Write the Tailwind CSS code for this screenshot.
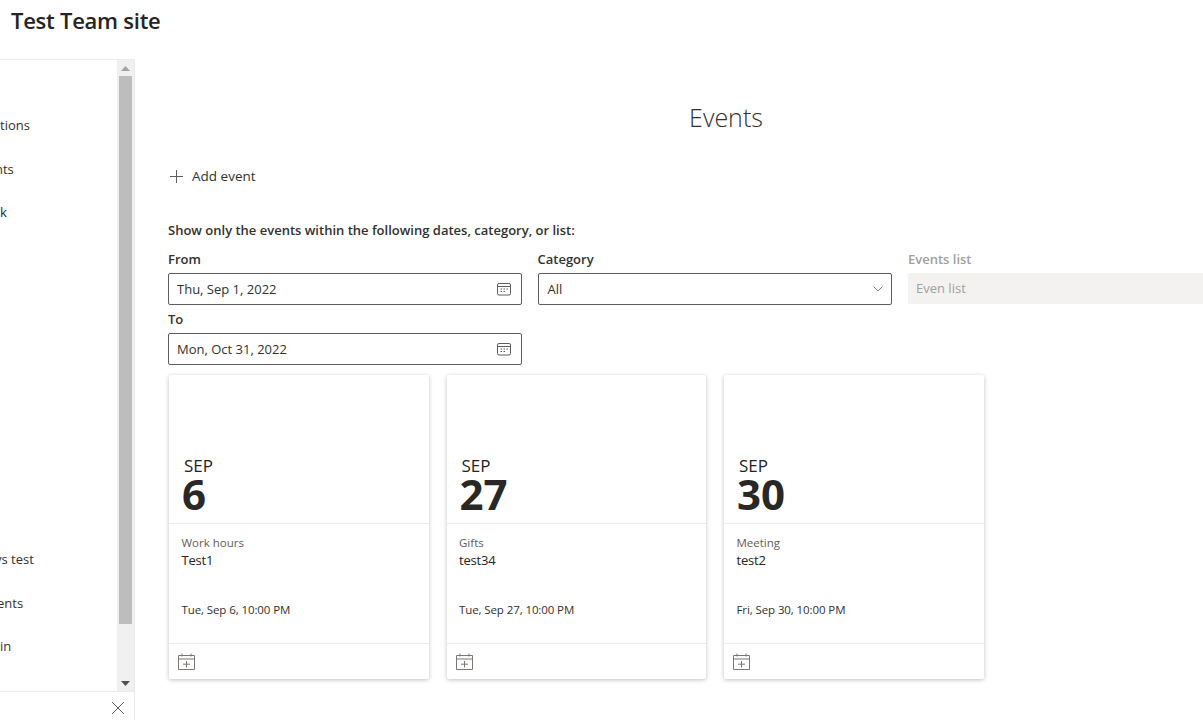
<!DOCTYPE html>
<html>
<head>
<meta charset="utf-8">
<script src="https://cdn.jsdelivr.net/npm/@tailwindcss/browser@4"></script>
</head>
<body class="w-[1203px] h-[720px] overflow-hidden bg-white font-['Open_Sans','Noto_Sans',sans-serif] text-[#323130]">
<header class="h-[59px] pl-[11px] pt-[4px] text-[22px] leading-[32px] font-semibold text-[#252423] tracking-[-0.25px]">Test Team site</header>
<div class="flex h-[661px]">
  <aside class="w-[135px] shrink-0 flex flex-col border-t border-r border-[#edebe9]">
    <div class="flex-1 flex min-h-0">
      <nav class="w-[117px] overflow-hidden flex flex-col text-[13px] leading-[18px] text-[#323130]">
        <div class="h-[56px]"></div>
        <div class="h-[43.5px]">tions</div>
        <div class="h-[43.5px] -ml-[5px]">nts</div>
        <div class="h-[347px] text-[#0a2a66]">k</div>
        <div class="h-[43.5px] -ml-[5px]">ys test</div>
        <div class="h-[43.5px] -ml-[3px]">ents</div>
        <div class="text-[#4a2a4a]">in</div>
      </nav>
      <div class="w-[17px] bg-[#f0f0f0] flex flex-col items-center">
        <div class="h-[16px] flex items-center justify-center">
          <svg width="9" height="5" viewBox="0 0 9 5"><path d="M4.500 0 9 5H0z" fill="#a3a3a3"/></svg>
        </div>
        <div class="w-[13px] h-[548px] bg-[#bdbdbd]"></div>
        <div class="flex-1 flex items-end pb-[5px]">
          <svg width="9" height="5" viewBox="0 0 9 5"><path d="M0 0h9L4.500 5z" fill="#505050"/></svg>
        </div>
      </div>
    </div>
    <div class="h-[29px] shrink-0 border-t border-[#edebe9] flex items-center justify-end pr-[9px] pt-[3px]">
      <svg width="14" height="14" viewBox="0 0 14 14"><path d="M1 1l12 12M13 1L1 13" stroke="#605e5c" stroke-width="1" fill="none"/></svg>
    </div>
  </aside>
  <main class="flex-1 min-w-0 pl-[33px] overflow-hidden">
    <h1 class="w-[1182px] -ml-[33px] h-[44px] mt-[41px] text-center text-[25px] leading-[34px] font-light text-[#323130]">Events</h1>
    <div class="h-[32px] mt-[16px] flex items-center gap-[8px] text-[13.500px] text-[#323130]">
      <svg class="ml-[1px]" width="15" height="15" viewBox="0 0 15 15"><path d="M7.500 1v13M1 7.500h13" stroke="#605e5c" stroke-width="1" fill="none"/></svg>
      <span>Add event</span>
    </div>
    <p class="mt-[29px] text-[13px] leading-[18px] font-semibold text-[#323130]">Show only the events within the following dates, category, or list:</p>
    <div class="flex gap-[15.500px] mt-[10px] w-[1100px]">
      <div class="w-[354px] shrink-0">
        <label class="block text-[13px] leading-[20px] font-semibold">From</label>
        <div class="mt-[4px] h-[32px] rounded-[2px] border border-[#605e5c] flex items-center justify-between pl-[8px] pr-[9px] text-[13px]">
          <span class="pt-[1px]">Thu, Sep 1, 2022</span>
          <svg width="16" height="16" viewBox="0 0 16 16" fill="none" stroke="#605e5c"><rect x="1.500" y="2.500" width="13" height="11.500" rx="1.500"/><path d="M1.500 5.500h13"/><path d="M4.500 8h1.500M7.500 8h1.500M10.500 8h1.500M4.500 10.500h1.500M7.500 10.500h1.500" stroke-width="1.200"/></svg>
        </div>
        <label class="block mt-[4px] text-[13px] leading-[20px] font-semibold">To</label>
        <div class="mt-[4px] h-[32px] rounded-[2px] border border-[#605e5c] flex items-center justify-between pl-[8px] pr-[9px] text-[13px]">
          <span class="pt-[1px]">Mon, Oct 31, 2022</span>
          <svg width="16" height="16" viewBox="0 0 16 16" fill="none" stroke="#605e5c"><rect x="1.500" y="2.500" width="13" height="11.500" rx="1.500"/><path d="M1.500 5.500h13"/><path d="M4.500 8h1.500M7.500 8h1.500M10.500 8h1.500M4.500 10.500h1.500M7.500 10.500h1.500" stroke-width="1.200"/></svg>
        </div>
      </div>
      <div class="w-[354.500px] shrink-0">
        <label class="block text-[13px] leading-[20px] font-semibold">Category</label>
        <div class="mt-[4px] h-[32px] rounded-[2px] border border-[#605e5c] flex items-center justify-between pl-[9px] pr-[8px] text-[13px]">
          <span class="pt-[1px]">All</span>
          <svg width="10" height="6" viewBox="0 0 10 6" fill="none" stroke="#7a7775"><path d="M.5.500 5 5 9.500.500"/></svg>
        </div>
      </div>
      <div class="w-[320px] shrink-0 ml-[0.5px]">
        <label class="block text-[13px] leading-[20px] font-semibold text-[#a19f9d]">Events list</label>
        <div class="mt-[4px] h-[31px] rounded-[2px] bg-[#f3f2f1] flex items-center pl-[8px] text-[13px] text-[#a19f9d]">Even list</div>
      </div>
    </div>
    <div class="flex gap-[18px] mt-[10px] ml-[1px]">
      <article class="w-[259.500px] h-[304px] bg-white rounded-[2px] flex flex-col shadow-[0_1px_4px_rgba(0,0,0,0.25)]">
        <div class="h-[149px] shrink-0 border-b border-[#edebe9] flex flex-col justify-end pl-[13px] pb-[8px]">
          <div class="pl-[2px] text-[17px] leading-[14px] text-[#252423]">SEP</div>
          <div class="text-[42px] leading-[42px] font-bold text-[#292827]">6</div>
        </div>
        <div class="h-[120px] shrink-0 border-b border-[#edebe9] pl-[12.500px] pt-[11px]">
          <div class="text-[11.500px] leading-[16px] text-[#605e5c]">Work hours</div>
          <div class="text-[13px] leading-[18px] font-[500] tracking-[-0.2px] text-[#252423]">Test1</div>
          <div class="mt-[33px] text-[11.500px] leading-[16px] tracking-[-0.1px] text-[#323130]">Tue, Sep 6, 10:00 PM</div>
        </div>
        <div class="flex-1 flex items-center pl-[9px]">
          <svg width="17" height="17" viewBox="0 0 17 17" fill="none" stroke="#7a7775"><path d="M.5 2.500h16v14H.5zM.5 6h16M4 .5v3M13 .5v3M8.500 8v6.500M5 11.200h7"/></svg>
        </div>
      </article>
      <article class="w-[259.500px] h-[304px] bg-white rounded-[2px] flex flex-col shadow-[0_1px_4px_rgba(0,0,0,0.25)]">
        <div class="h-[149px] shrink-0 border-b border-[#edebe9] flex flex-col justify-end pl-[13px] pb-[8px]">
          <div class="pl-[2px] text-[17px] leading-[14px] text-[#252423]">SEP</div>
          <div class="text-[42px] leading-[42px] font-bold text-[#292827]">27</div>
        </div>
        <div class="h-[120px] shrink-0 border-b border-[#edebe9] pl-[12.500px] pt-[11px]">
          <div class="text-[11.500px] leading-[16px] text-[#605e5c]">Gifts</div>
          <div class="text-[13px] leading-[18px] font-[500] tracking-[-0.2px] text-[#252423]">test34</div>
          <div class="mt-[33px] text-[11.500px] leading-[16px] tracking-[-0.1px] text-[#323130]">Tue, Sep 27, 10:00 PM</div>
        </div>
        <div class="flex-1 flex items-center pl-[9px]">
          <svg width="17" height="17" viewBox="0 0 17 17" fill="none" stroke="#7a7775"><path d="M.5 2.500h16v14H.5zM.5 6h16M4 .5v3M13 .5v3M8.500 8v6.500M5 11.200h7"/></svg>
        </div>
      </article>
      <article class="w-[259.500px] h-[304px] bg-white rounded-[2px] flex flex-col shadow-[0_1px_4px_rgba(0,0,0,0.25)]">
        <div class="h-[149px] shrink-0 border-b border-[#edebe9] flex flex-col justify-end pl-[13px] pb-[8px]">
          <div class="pl-[2px] text-[17px] leading-[14px] text-[#252423]">SEP</div>
          <div class="text-[42px] leading-[42px] font-bold text-[#292827]">30</div>
        </div>
        <div class="h-[120px] shrink-0 border-b border-[#edebe9] pl-[12.500px] pt-[11px]">
          <div class="text-[11.500px] leading-[16px] text-[#605e5c]">Meeting</div>
          <div class="text-[13px] leading-[18px] font-[500] tracking-[-0.2px] text-[#252423]">test2</div>
          <div class="mt-[33px] text-[11.500px] leading-[16px] tracking-[-0.1px] text-[#323130]">Fri, Sep 30, 10:00 PM</div>
        </div>
        <div class="flex-1 flex items-center pl-[9px]">
          <svg width="17" height="17" viewBox="0 0 17 17" fill="none" stroke="#7a7775"><path d="M.5 2.500h16v14H.5zM.5 6h16M4 .5v3M13 .5v3M8.500 8v6.500M5 11.200h7"/></svg>
        </div>
      </article>
    </div>
  </main>
</div>
</body>
</html>
